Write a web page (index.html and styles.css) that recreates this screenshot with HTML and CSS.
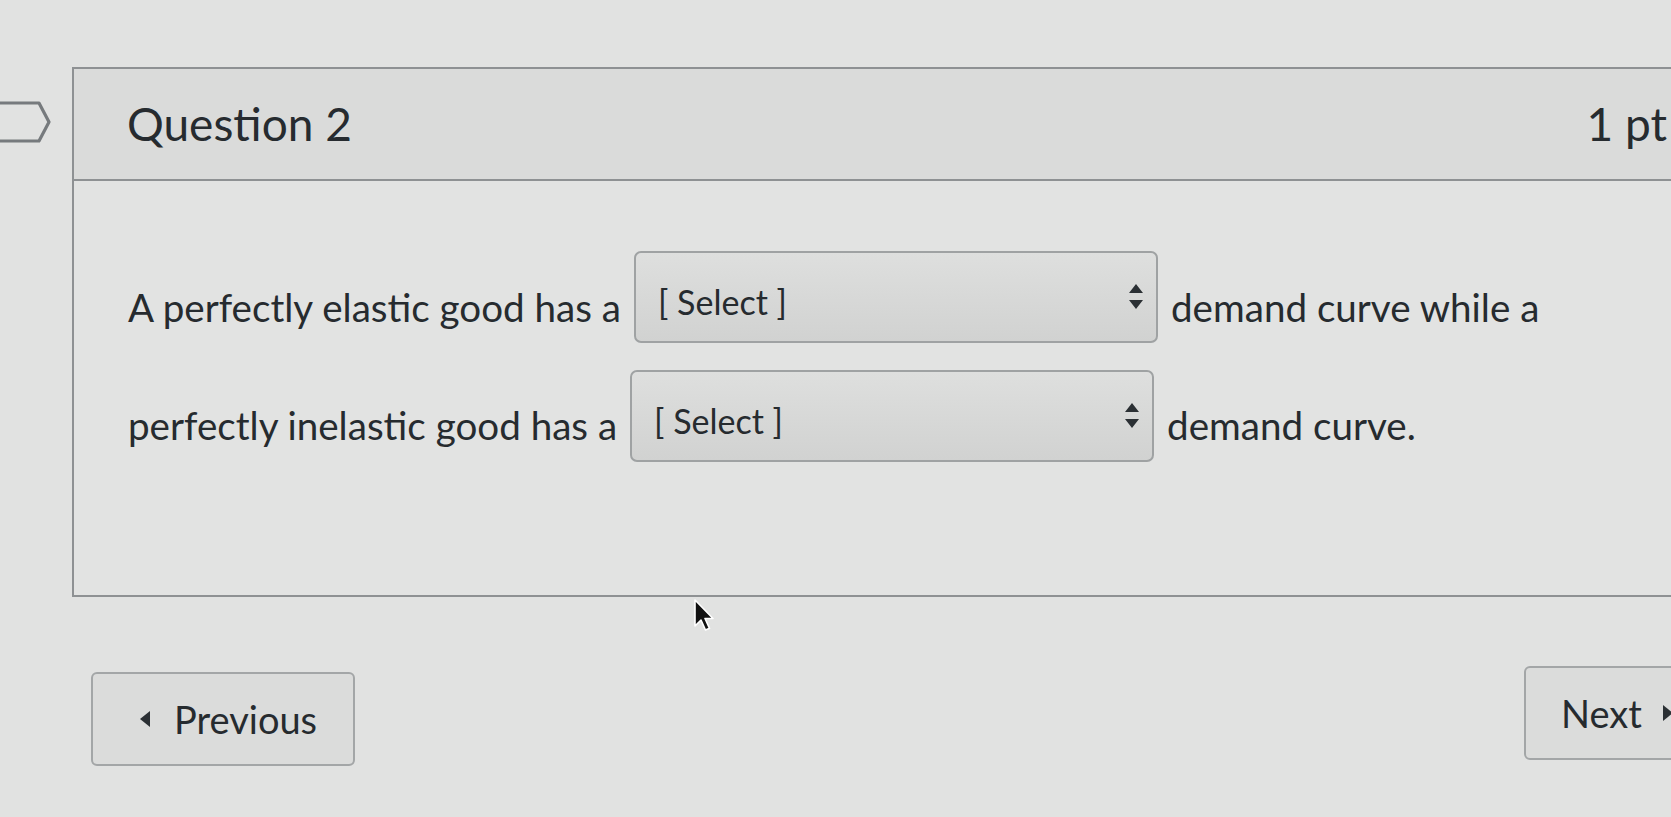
FILE: index.html
```html
<!DOCTYPE html>
<html lang="en">
<head>
<meta charset="utf-8">
<title>Question 2</title>
<link rel="stylesheet" href="styles.css">
</head>
<body>
<div class="page">
  <div class="gutter">
    <svg class="flag" width="52" height="44" viewBox="0 0 52 44" aria-hidden="true">
      <path d="M-4 3 H39 L49 22 L39 41 H-4" fill="none" stroke="#767a7d" stroke-width="3.2" stroke-linejoin="round"/>
    </svg>
  </div>
  <div class="card">
    <div class="card-header">
      <span class="q-title">Question 2</span>
      <span class="q-points">1 pt</span>
    </div>
    <div class="card-body">
      <div class="row">
        <span class="txt">A perfectly elastic good has a</span>
        <div class="select">
          <span class="select-label">[ Select ]</span>
          <svg class="arrows" width="14" height="26" viewBox="0 0 14 26" aria-hidden="true">
            <path d="M7 0 L14 9 H0 Z M0 16 H14 L7 25 Z" fill="#2b3034"/>
          </svg>
        </div>
        <span class="txt">demand curve while a</span>
      </div>
      <div class="row second">
        <span class="txt">perfectly inelastic good has a</span>
        <div class="select">
          <span class="select-label">[ Select ]</span>
          <svg class="arrows" width="14" height="26" viewBox="0 0 14 26" aria-hidden="true">
            <path d="M7 0 L14 9 H0 Z M0 16 H14 L7 25 Z" fill="#2b3034"/>
          </svg>
        </div>
        <span class="txt">demand curve.</span>
      </div>
    </div>
  </div>
</div>
<div class="nav">
  <div class="btn prev">
    <svg width="11" height="16" viewBox="0 0 11 16" aria-hidden="true"><path d="M10 0 V16 L0 8 Z" fill="#2b3034"/></svg>
    <span>Previous</span>
  </div>
  <div class="btn next">
    <span>Next</span>
    <svg width="11" height="16" viewBox="0 0 11 16" aria-hidden="true"><path d="M1 0 V16 L11 8 Z" fill="#2b3034"/></svg>
  </div>
</div>
<svg class="cursor" width="24" height="36" viewBox="0 0 24 36" aria-hidden="true">
  <path d="M1 1 V27 L7 21 L11.5 31 L15.5 29.3 L11 19.5 H19 Z" fill="#111" stroke="#fff" stroke-width="1.6" stroke-linejoin="round"/>
</svg>
</body>
</html>
```

FILE: styles.css
```css
html, body {
  margin: 0;
  padding: 0;
}
body {
  width: 1671px;
  height: 817px;
  overflow: hidden;
  background: #e1e2e1;
  font-family: Lato, "Open Sans", "Noto Sans", sans-serif;
  color: #262b2f;
  position: relative;
}
.page {
  display: flex;
  align-items: flex-start;
  padding-top: 67px;
}
.gutter {
  width: 72px;
  flex: none;
  padding-top: 33px;
}
.flag {
  display: block;
}
.card {
  flex: none;
  width: 1640px;
  border: 2px solid #8e9193;
  background: #e2e3e2;
}
.card-header {
  height: 110px;
  display: flex;
  align-items: center;
  justify-content: space-between;
  padding: 0 47px 0 53px;
  background: #dadbda;
  border-bottom: 2px solid #8e9193;
}
.q-title, .q-points {
  font-size: 46px;
  font-weight: 400;
  line-height: 1;
}
.card-body {
  height: 344px;
  padding: 70px 0 0 54px;
}
.row {
  display: flex;
  align-items: flex-start;
  gap: 13px;
}
.row.second {
  margin-top: 27px;
}
.txt {
  font-size: 38.6px;
  line-height: 1;
  white-space: nowrap;
  margin-top: 37px;
}
.row.second .txt {
  margin-top: 36px;
}
.select {
  width: 524px;
  height: 92px;
  box-sizing: border-box;
  border: 2px solid #9fa2a3;
  border-radius: 7px;
  background: linear-gradient(#dedfde, #d1d2d1);
  display: flex;
  align-items: center;
  padding: 0 13px 0 22px;
}
.select-label {
  font-size: 34px;
  line-height: 34px;
  padding-top: 10px;
}
.arrows {
  margin-left: auto;
  display: block;
}
.nav {
  display: flex;
  justify-content: space-between;
  align-items: flex-start;
  padding: 75px 0 0 91px;
  margin-right: -24px;
}
.btn {
  height: 94px;
  box-sizing: border-box;
  border: 2px solid #a3a6a7;
  border-radius: 6px;
  background: #dbdcdb;
  display: flex;
  align-items: center;
  font-size: 38px;
  line-height: 1;
}
.btn.prev {
  width: 264px;
  padding-left: 47px;
  gap: 23px;
}
.btn.next {
  width: 171px;
  padding-left: 35px;
  gap: 20px;
  margin-top: -6px;
}
.cursor {
  position: absolute;
  left: 694px;
  top: 599px;
}
```
